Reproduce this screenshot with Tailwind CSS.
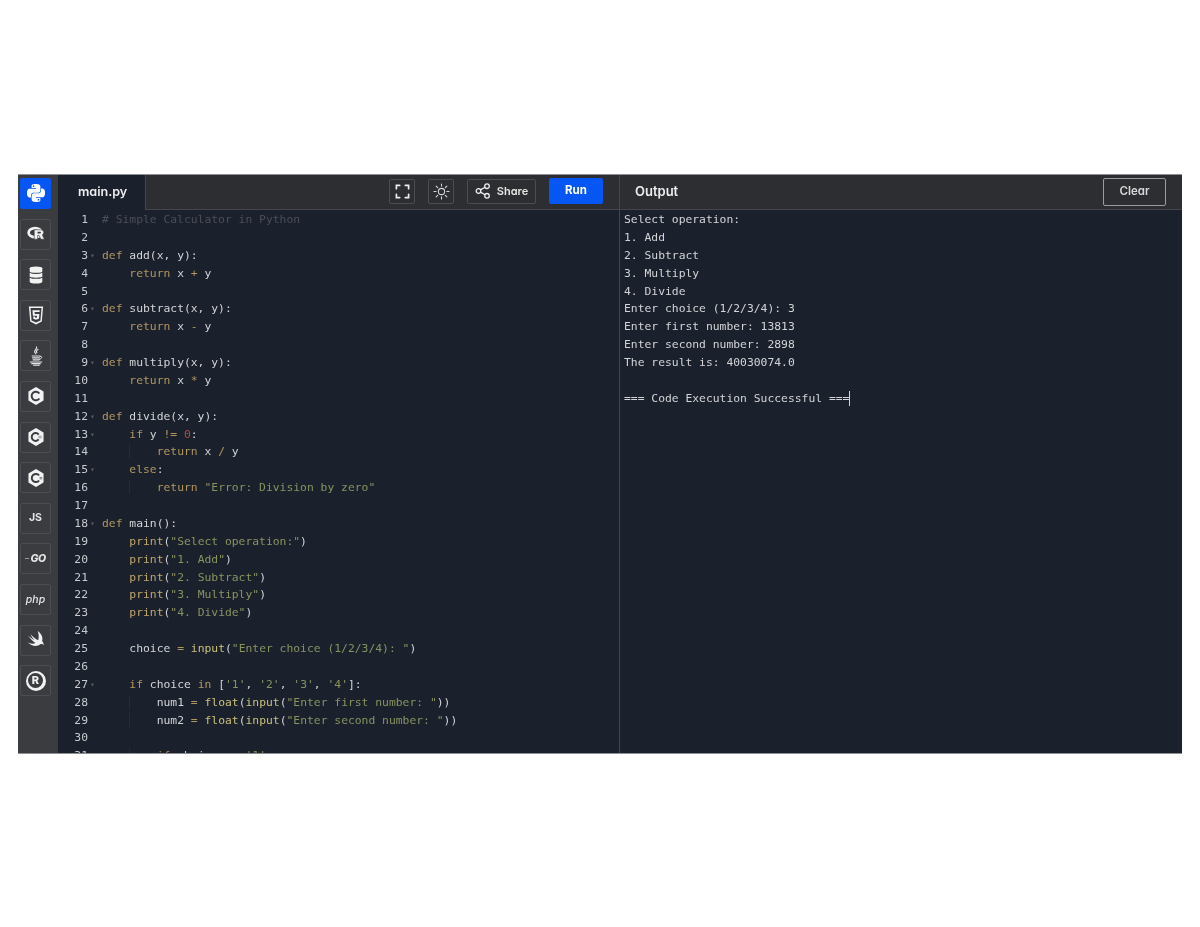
<!DOCTYPE html>
<html lang="en">
<head>
  <meta charset="UTF-8">
  <meta name="viewport" content="width=device-width, initial-scale=1.0">
  <title>Python Online Compiler</title>
  <script src="https://cdn.jsdelivr.net/npm/@tailwindcss/browser@4"></script>
</head>
<body class="bg-white h-[927px] overflow-hidden pt-[174px] pl-[18px]">
  <div class="flex w-[1164px] h-[580px] overflow-hidden border-y border-[#8f9093] blur-[0.45px] font-['Inter',sans-serif] [font-feature-settings:'cv11']">

    <!-- Language sidebar -->
    <aside class="w-[40px] shrink-0 bg-[#3a3c40] flex flex-col gap-[9.6px] pl-[2px] pt-[3px]">
      <div class="w-[31px] h-[31px] rounded-[2px] bg-[#0556f3] flex items-center justify-center pb-[1px]">
        <svg class="w-[18px] h-[18px]" viewBox="0 0 24 24" fill="#fff"><path d="M14.25.18l.9.2.73.26.59.3.45.32.34.34.25.34.16.33.1.3.04.26.02.2-.01.13V8.5l-.05.63-.13.55-.21.46-.26.38-.3.31-.33.25-.35.19-.35.14-.33.1-.3.07-.26.04-.21.02H8.77l-.69.05-.59.14-.5.22-.41.27-.33.32-.27.35-.2.36-.15.37-.1.35-.07.32-.04.27-.02.21v3.06H3.17l-.21-.03-.28-.07-.32-.12-.35-.18-.36-.26-.36-.36-.35-.46-.32-.59-.28-.73-.21-.88-.14-1.05-.05-1.23.06-1.22.16-1.04.24-.87.32-.71.36-.57.4-.44.42-.33.42-.24.4-.16.36-.1.32-.05.24-.01h.16l.06.01h8.16v-.83H6.18l-.01-2.75-.02-.37.05-.34.11-.31.17-.28.25-.26.31-.23.38-.2.44-.18.51-.15.58-.12.64-.1.71-.06.77-.04.84-.02 1.27.05zm-6.3 1.98l-.23.33-.08.41.08.41.23.34.33.22.41.09.41-.09.33-.22.23-.34.08-.41-.08-.41-.23-.33-.33-.22-.41-.09-.41.09zm13.09 3.95l.28.06.32.12.35.18.36.27.36.35.35.47.32.59.28.73.21.88.14 1.04.05 1.23-.06 1.23-.16 1.04-.24.86-.32.71-.36.57-.4.45-.42.33-.42.24-.4.16-.36.09-.32.05-.24.02-.16-.01h-8.22v.82h5.84l.01 2.76.02.36-.05.34-.11.31-.17.29-.25.25-.31.24-.38.2-.44.17-.51.15-.58.13-.64.09-.71.07-.77.04-.84.01-1.27-.04-1.07-.14-.9-.2-.73-.25-.59-.3-.45-.33-.34-.34-.25-.34-.16-.33-.1-.3-.04-.25-.02-.2.01-.13v-5.34l.05-.64.13-.54.21-.46.26-.38.3-.32.33-.24.35-.2.35-.14.33-.1.3-.06.26-.04.21-.02.13-.01h5.84l.69-.05.59-.14.5-.21.41-.28.33-.32.27-.35.2-.36.15-.36.1-.35.07-.32.04-.28.02-.21V6.07h2.09l.14.01zm-6.47 14.25l-.23.33-.08.41.08.41.23.33.33.23.41.08.41-.08.33-.23.23-.33.08-.41-.08-.41-.23-.33-.33-.23-.41-.08-.41.08z"/></svg>
      </div>
      <!-- R -->
      <div class="w-[31px] h-[31px] rounded-[2px] border border-[#4b4d52] flex items-center justify-center">
        <svg class="w-[20px] h-[16px]" viewBox="0 0 20 18"><ellipse cx="9" cy="7.500" rx="7.300" ry="5.200" fill="none" stroke="#f2f2f2" stroke-width="3"/><path d="M8 4.200h7.500q3.200 0 3.200 3 0 2-1.700 2.700l2.500 5h-4l-2-4.300h-1.700v4.300H8z" fill="#f2f2f2" stroke="#3a3c40" stroke-width=".7"/><path d="M11.700 6.400h2.800q1.100 0 1.100 1t-1.100 1h-2.800z" fill="#3a3c40"/></svg>
      </div>
      <!-- SQL -->
      <div class="w-[31px] h-[31px] rounded-[2px] border border-[#4b4d52] flex items-center justify-center">
        <svg class="w-[14px] h-[18px]" viewBox="0 0 14 20" fill="#f2f2f2"><path d="M0 2.500Q0 .5 7 .5t7 2V6q0 1.500-7 1.500T0 6z"/><path d="M0 7.500q2 1.300 7 1.300t7-1.300v4q0 1.600-7 1.600t-7-1.600z"/><path d="M0 13q2 1.300 7 1.300t7-1.300v4.500q0 2-7 2t-7-2z"/></svg>
      </div>
      <!-- HTML -->
      <div class="w-[31px] h-[31px] rounded-[2px] border border-[#4b4d52] flex items-center justify-center">
        <svg class="w-[16px] h-[19px]" viewBox="0 0 18 20"><path d="M1 0h16l-1.500 16.800L9 20l-6.500-3.200z" fill="#f2f2f2"/><path d="M2.800 1.700h12.400l-1.200 13.900L9 18l-5-2.400z" fill="#3a3c40"/><path d="M5 4h8.200l-.2 2.200H7.400l.2 2.200h5.200l-.5 5.300L9 14.800l-3-1.100-.2-2.500h2.100l.1 1 1 .3 1-.3.200-1.900H5.500z" fill="#f2f2f2"/></svg>
      </div>
      <!-- Java -->
      <div class="w-[31px] h-[31px] rounded-[2px] border border-[#4b4d52] flex items-center justify-center">
        <svg class="w-[16px] h-[20px]" viewBox="0 0 16 21" fill="none" stroke="#e6e6e6"><path d="M8.500.5c1.500 2.500-3 3.800-1.800 6 .4.800 1 1.200 1 2.200M10.500 3.500C8 4.800 8 6 9.200 7.500" stroke-width="1.200"/><path d="M3.500 10.500h9M4 12.500h8M4.500 14.500h7" stroke-width="1.200"/><path d="M12 11c2.800-.8 2.800 2.200-1 3.300" stroke-width="1"/><path d="M1.500 16.700h13M3 18.500h10M5 20.300h7" stroke-width="1.100"/></svg>
      </div>
      <!-- C -->
      <div class="w-[31px] h-[31px] rounded-[2px] border border-[#4b4d52] flex items-center justify-center">
        <svg class="w-[16px] h-[18px]" viewBox="0 0 18 20"><path d="M9 1l7.500 4.400v9.200L9 19l-7.500-4.400V5.400z" fill="#f2f2f2" stroke="#f2f2f2" stroke-width="2" stroke-linejoin="round"/><path d="M12.800 7.200A4.800 4.800 0 1 0 12.800 12.800" fill="none" stroke="#3a3c40" stroke-width="2.200"/></svg>
      </div>
      <!-- C++ -->
      <div class="w-[31px] h-[31px] rounded-[2px] border border-[#4b4d52] flex items-center justify-center">
        <svg class="w-[16px] h-[18px]" viewBox="0 0 18 20"><path d="M9 1l7.500 4.400v9.200L9 19l-7.500-4.400V5.400z" fill="#f2f2f2" stroke="#f2f2f2" stroke-width="2" stroke-linejoin="round"/><path d="M12 7.200A4.400 4.400 0 1 0 12 12.800" fill="none" stroke="#3a3c40" stroke-width="2.200"/><path d="M11.500 9.200h4M11.500 11h4" stroke="#8d8e91" stroke-width="1"/></svg>
      </div>
      <!-- C# -->
      <div class="w-[31px] h-[31px] rounded-[2px] border border-[#4b4d52] flex items-center justify-center">
        <svg class="w-[16px] h-[18px]" viewBox="0 0 18 20"><path d="M9 1l7.500 4.400v9.200L9 19l-7.500-4.400V5.400z" fill="#f2f2f2" stroke="#f2f2f2" stroke-width="2" stroke-linejoin="round"/><path d="M12.500 7.200A4.600 4.600 0 1 0 12.500 12.800" fill="none" stroke="#3a3c40" stroke-width="2.200"/><path d="M13 9.500h3M13 11h3" stroke="#3a3c40" stroke-width=".7"/></svg>
      </div>
      <div class="w-[31px] h-[31px] rounded-[2px] border border-[#4b4d52] flex items-center justify-center text-[10.500px] font-bold text-[#e6e6e6]">JS</div>
      <!-- Go -->
      <div class="w-[31px] h-[31px] rounded-[2px] border border-[#4b4d52] flex items-center justify-center gap-[1px]">
        <span class="w-[4px] h-[1px] bg-[#999]"></span>
        <span class="text-[10.500px] font-extrabold italic text-[#e6e6e6] tracking-[-0.5px] leading-none">GO</span>
      </div>
      <div class="w-[31px] h-[31px] rounded-[2px] border border-[#4b4d52] flex items-center justify-center text-[10.500px] font-medium italic text-[#e6e6e6]">php</div>
      <!-- Swift -->
      <div class="w-[31px] h-[31px] rounded-[2px] border border-[#4b4d52] flex items-center justify-center">
        <svg class="w-[20px] h-[20px]" viewBox="0 0 18 18" fill="#f2f2f2"><path d="M10.500 1c3.500 2.500 5 6 4 9 1.300 1.600 1.500 3 1.300 3.800-.7-1.200-1.900-1.300-3-.9C10 15.200 5.500 15 1 10.800c2 1.300 5 2.200 7.500 1C6 10 3.500 7.500 1.800 5c2 1.700 4.500 3.500 6 4.300C6.300 7.800 4.800 5.500 4 3.800c2 2 4.700 4.300 7 5.500.8-2.600.5-5.500-.5-8.300z"/></svg>
      </div>
      <!-- Rust -->
      <div class="w-[31px] h-[31px] rounded-[2px] border border-[#4b4d52] flex items-center justify-center">
        <div class="w-[20px] h-[20px] rounded-full bg-[#f2f2f2] flex items-center justify-center">
          <div class="w-[15px] h-[15px] rounded-full bg-[#3a3c40] flex items-center justify-center text-[11px] font-extrabold leading-none text-[#f2f2f2]">R</div>
        </div>
      </div>
    </aside>

    <!-- Editor -->
    <section class="w-[561px] shrink-0 bg-[#1b202d] flex flex-col">
      <header class="h-[35px] shrink-0 flex bg-[#2d2e31] text-white">
        <div class="w-[88px] bg-[#1b202d] border-r border-[#44464b] flex items-center pl-[20px] text-[12.600px] font-semibold text-[#eee]">main.py</div>
        <div class="flex-1 border-b border-[#44464b] flex items-center justify-end gap-[13px] pr-[16px] pb-[2px]">
          <button class="w-[26px] h-[25px] rounded-[2px] border border-[#4b4d52] flex items-center justify-center">
            <svg class="w-[15px] h-[15px]" viewBox="0 0 16 16" fill="none" stroke="#eee" stroke-width="1.800" stroke-linecap="round"><path d="M1.500 5V1.500H5M11 1.500h3.500V5M14.500 11v3.500H11M5 14.500H1.500V11"/></svg>
          </button>
          <button class="w-[26px] h-[25px] rounded-[2px] border border-[#4b4d52] flex items-center justify-center">
            <svg class="w-[17px] h-[17px]" viewBox="0 0 18 18" fill="none" stroke="#d8d8d8" stroke-width="1.100" stroke-linecap="round"><circle cx="9" cy="9" r="3.300"/><path d="M9 1v2.300M9 14.700V17M1 9h2.300M14.700 9H17M3.300 3.300 5 5M13 13l1.700 1.700M3.300 14.700 5 13M13 5l1.700-1.700"/></svg>
          </button>
          <button class="w-[69px] h-[25px] rounded-[2px] border border-[#4b4d52] flex items-center justify-center gap-[6px] text-[11px] font-semibold text-[#e6e6e6]">
            <svg class="w-[16px] h-[16px]" viewBox="0 0 16 16" fill="none" stroke="#eee" stroke-width="1.300"><circle cx="3.500" cy="8" r="2.300"/><circle cx="12" cy="3.200" r="2.300"/><circle cx="12" cy="12.800" r="2.300"/><path d="M5.500 6.900l4.500-2.600M5.500 9.100l4.500 2.600"/></svg>
            Share
          </button>
          <button class="w-[54px] h-[26px] rounded-[2px] bg-[#0556f3] text-[11.500px] font-bold text-white">Run</button>
        </div>
      </header>
      <div class="pt-[1px] font-['DejaVu_Sans_Mono',monospace] text-[11.350px] leading-[17.880px] text-[#d3d4d6] [&>div]:whitespace-pre">
        <div class="flex"><span class="w-[30px] text-right text-[#c8cacd]">1</span><span class="w-[14px]"></span><span class="text-[#4b4e57]"># Simple Calculator in Python</span></div>
        <div class="flex"><span class="w-[30px] text-right text-[#c8cacd]">2</span><span class="w-[14px]"></span><span></span></div>
        <div class="flex"><span class="w-[30px] text-right text-[#c8cacd]">3</span><span class="w-[14px] pl-[2px] text-[8px] text-[#5a5d66]">▾</span><span><span class="text-[#b2965f]">def</span> add(x, y):</span></div>
        <div class="flex"><span class="w-[30px] text-right text-[#c8cacd]">4</span><span class="w-[14px]"></span><span>    <span class="text-[#b2965f]">return</span> x <span class="text-[#b2965f]">+</span> y</span></div>
        <div class="flex"><span class="w-[30px] text-right text-[#c8cacd]">5</span><span class="w-[14px]"></span><span></span></div>
        <div class="flex"><span class="w-[30px] text-right text-[#c8cacd]">6</span><span class="w-[14px] pl-[2px] text-[8px] text-[#5a5d66]">▾</span><span><span class="text-[#b2965f]">def</span> subtract(x, y):</span></div>
        <div class="flex"><span class="w-[30px] text-right text-[#c8cacd]">7</span><span class="w-[14px]"></span><span>    <span class="text-[#b2965f]">return</span> x <span class="text-[#b2965f]">-</span> y</span></div>
        <div class="flex"><span class="w-[30px] text-right text-[#c8cacd]">8</span><span class="w-[14px]"></span><span></span></div>
        <div class="flex"><span class="w-[30px] text-right text-[#c8cacd]">9</span><span class="w-[14px] pl-[2px] text-[8px] text-[#5a5d66]">▾</span><span><span class="text-[#b2965f]">def</span> multiply(x, y):</span></div>
        <div class="flex"><span class="w-[30px] text-right text-[#c8cacd]">10</span><span class="w-[14px]"></span><span>    <span class="text-[#b2965f]">return</span> x <span class="text-[#b2965f]">*</span> y</span></div>
        <div class="flex"><span class="w-[30px] text-right text-[#c8cacd]">11</span><span class="w-[14px]"></span><span></span></div>
        <div class="flex"><span class="w-[30px] text-right text-[#c8cacd]">12</span><span class="w-[14px] pl-[2px] text-[8px] text-[#5a5d66]">▾</span><span><span class="text-[#b2965f]">def</span> divide(x, y):</span></div>
        <div class="flex"><span class="w-[30px] text-right text-[#c8cacd]">13</span><span class="w-[14px] pl-[2px] text-[8px] text-[#5a5d66]">▾</span><span>    <span class="text-[#b2965f]">if</span> y <span class="text-[#b2965f]">!=</span> <span class="text-[#a5503d]">0</span>:</span></div>
        <div class="flex"><span class="w-[30px] text-right text-[#c8cacd]">14</span><span class="w-[14px]"></span><span>    <span class="shadow-[inset_1px_0_0_#272b37]">    </span><span class="text-[#b2965f]">return</span> x <span class="text-[#b2965f]">/</span> y</span></div>
        <div class="flex"><span class="w-[30px] text-right text-[#c8cacd]">15</span><span class="w-[14px] pl-[2px] text-[8px] text-[#5a5d66]">▾</span><span>    <span class="text-[#b2965f]">else</span>:</span></div>
        <div class="flex"><span class="w-[30px] text-right text-[#c8cacd]">16</span><span class="w-[14px]"></span><span>    <span class="shadow-[inset_1px_0_0_#272b37]">    </span><span class="text-[#b2965f]">return</span> <span class="text-[#88935f]">"Error: Division by zero"</span></span></div>
        <div class="flex"><span class="w-[30px] text-right text-[#c8cacd]">17</span><span class="w-[14px]"></span><span></span></div>
        <div class="flex"><span class="w-[30px] text-right text-[#c8cacd]">18</span><span class="w-[14px] pl-[2px] text-[8px] text-[#5a5d66]">▾</span><span><span class="text-[#b2965f]">def</span> main():</span></div>
        <div class="flex"><span class="w-[30px] text-right text-[#c8cacd]">19</span><span class="w-[14px]"></span><span>    <span class="text-[#c0a76c]">print</span>(<span class="text-[#88935f]">"Select operation:"</span>)</span></div>
        <div class="flex"><span class="w-[30px] text-right text-[#c8cacd]">20</span><span class="w-[14px]"></span><span>    <span class="text-[#c0a76c]">print</span>(<span class="text-[#88935f]">"1. Add"</span>)</span></div>
        <div class="flex"><span class="w-[30px] text-right text-[#c8cacd]">21</span><span class="w-[14px]"></span><span>    <span class="text-[#c0a76c]">print</span>(<span class="text-[#88935f]">"2. Subtract"</span>)</span></div>
        <div class="flex"><span class="w-[30px] text-right text-[#c8cacd]">22</span><span class="w-[14px]"></span><span>    <span class="text-[#c0a76c]">print</span>(<span class="text-[#88935f]">"3. Multiply"</span>)</span></div>
        <div class="flex"><span class="w-[30px] text-right text-[#c8cacd]">23</span><span class="w-[14px]"></span><span>    <span class="text-[#c0a76c]">print</span>(<span class="text-[#88935f]">"4. Divide"</span>)</span></div>
        <div class="flex"><span class="w-[30px] text-right text-[#c8cacd]">24</span><span class="w-[14px]"></span><span></span></div>
        <div class="flex"><span class="w-[30px] text-right text-[#c8cacd]">25</span><span class="w-[14px]"></span><span>    choice <span class="text-[#b2965f]">=</span> <span class="text-[#c8c07a]">input</span>(<span class="text-[#88935f]">"Enter choice (1/2/3/4): "</span>)</span></div>
        <div class="flex"><span class="w-[30px] text-right text-[#c8cacd]">26</span><span class="w-[14px]"></span><span></span></div>
        <div class="flex"><span class="w-[30px] text-right text-[#c8cacd]">27</span><span class="w-[14px] pl-[2px] text-[8px] text-[#5a5d66]">▾</span><span>    <span class="text-[#b2965f]">if</span> choice <span class="text-[#b2965f]">in</span> [<span class="text-[#88935f]">'1'</span>, <span class="text-[#88935f]">'2'</span>, <span class="text-[#88935f]">'3'</span>, <span class="text-[#88935f]">'4'</span>]:</span></div>
        <div class="flex"><span class="w-[30px] text-right text-[#c8cacd]">28</span><span class="w-[14px]"></span><span>    <span class="shadow-[inset_1px_0_0_#272b37]">    </span>num1 <span class="text-[#b2965f]">=</span> <span class="text-[#c8c07a]">float</span>(<span class="text-[#c8c07a]">input</span>(<span class="text-[#88935f]">"Enter first number: "</span>))</span></div>
        <div class="flex"><span class="w-[30px] text-right text-[#c8cacd]">29</span><span class="w-[14px]"></span><span>    <span class="shadow-[inset_1px_0_0_#272b37]">    </span>num2 <span class="text-[#b2965f]">=</span> <span class="text-[#c8c07a]">float</span>(<span class="text-[#c8c07a]">input</span>(<span class="text-[#88935f]">"Enter second number: "</span>))</span></div>
        <div class="flex"><span class="w-[30px] text-right text-[#c8cacd]">30</span><span class="w-[14px]"></span><span></span></div>
        <div class="flex"><span class="w-[30px] text-right text-[#c8cacd]">31</span><span class="w-[14px]"></span><span>    <span class="shadow-[inset_1px_0_0_#272b37]">    </span><span class="text-[#b2965f]">if</span> choice <span class="text-[#b2965f]">==</span> <span class="text-[#88935f]">'1'</span>:</span></div>
      </div>
    </section>

    <!-- Output -->
    <section class="flex-1 bg-[#1b202d] border-l border-[#44464b] flex flex-col">
      <header class="h-[35px] shrink-0 bg-[#2d2e31] border-b border-[#44464b] flex items-center justify-between pl-[15px] pr-[16px]">
        <span class="text-[13px] font-semibold text-[#eee]">Output</span>
        <button class="w-[63px] h-[28px] rounded-[2px] border border-[#9a9b9d] text-[11.500px] font-semibold text-[#d8d8d8]">Clear</button>
      </header>
      <div class="pt-[1px] pl-[4px] font-['DejaVu_Sans_Mono',monospace] text-[11.350px] leading-[17.880px] text-[#d3d4d6] [&>div]:whitespace-pre">
        <div>Select operation:</div>
        <div>1. Add</div>
        <div>2. Subtract</div>
        <div>3. Multiply</div>
        <div>4. Divide</div>
        <div>Enter choice (1/2/3/4): 3</div>
        <div>Enter first number: 13813</div>
        <div>Enter second number: 2898</div>
        <div>The result is: 40030074.0</div>
        <div>&nbsp;</div>
        <div class="flex"><span>=== Code Execution Successful ===</span><span class="w-px h-[15px] mt-px bg-[#d3d4d6]"></span></div>
      </div>
    </section>
  </div>
</body>
</html>
